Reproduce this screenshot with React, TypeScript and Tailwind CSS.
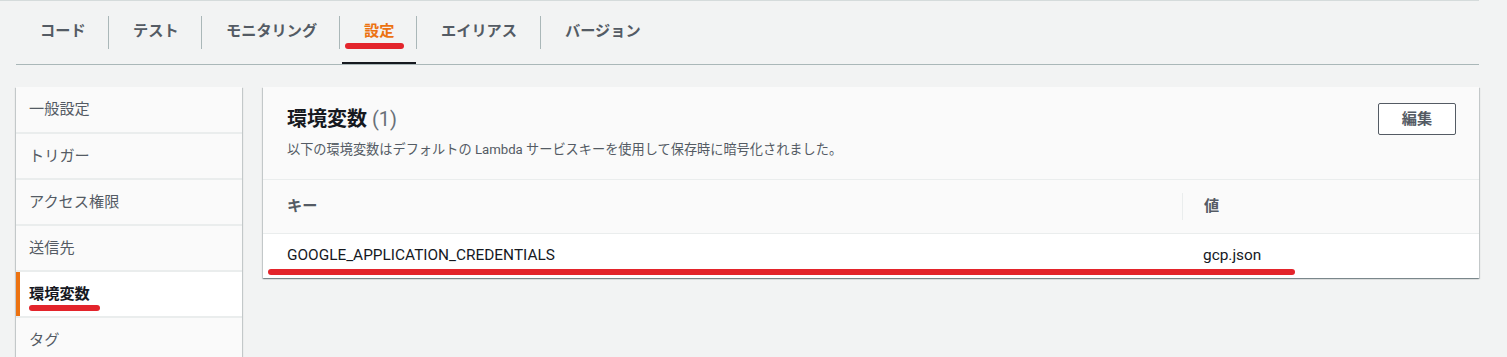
const tabs: [string, string][] = [
  ["コード", "w-[92px]"],
  ["テスト", "w-[92px]"],
  ["モニタリング", "w-[137px]"],
  ["設定", "w-[76px]"],
  ["エイリアス", "w-[123px]"],
  ["バージョン", "w-[123px]"],
];
const side = ["一般設定", "トリガー", "アクセス権限", "送信先", "環境変数", "タグ"];

const shadow =
  "shadow-[0_1px_1px_0_rgba(0,28,36,0.3),1px_1px_1px_0_rgba(0,28,36,0.15),-1px_1px_1px_0_rgba(0,28,36,0.15)]";

export default function App() {
  return (
    <div className="w-[1507px] h-[357px] overflow-hidden bg-[#f2f3f3] font-[Roboto,'Noto_Sans_CJK_JP',sans-serif]">
      <div className="h-px w-[1479px] bg-[#d5dbdb]" />
      {/* Tabs */}
      <div className="ml-4 w-[1463px] h-[64px] border-b border-[#aab7b8] flex">
        {tabs.map(([t, w], i) => {
          const active = t === "設定";
          return (
            <div key={t} className="flex h-full">
              {i > 0 && <div className="w-px h-[33px] mt-[15px] bg-[#aab7b8]" />}
              <div
                className={`relative h-full ${w} pl-6 flex items-center pb-[2px] text-[15.2px] font-bold leading-none whitespace-nowrap ${
                  active ? "text-[#ec7211]" : "text-[#545b64]"
                }`}
              >
                {t}
                {active && (
                  <>
                    <div className="absolute left-[2px] right-0 bottom-0 h-[2px] bg-[#16191f]" />
                    <div className="absolute left-[5px] top-[42px] w-[59px] h-[6px] rounded-full bg-[#e3242b]" />
                  </>
                )}
              </div>
            </div>
          );
        })}
      </div>

      <div className="mt-[22px] ml-4 flex gap-[21px] items-start">
        {/* Sidebar */}
        <div className={`w-[226px] bg-[#eaeded] flex flex-col gap-[2px] ${shadow}`}>
          {side.map((s, i) => {
            const active = s === "環境変数";
            return (
              <div
                key={s}
                className={`relative flex items-center pl-[13px] text-[15.2px] ${i === 0 ? "h-[45px]" : "h-[44px]"} ${
                  active ? "bg-white font-bold text-[#16191f]" : "bg-[#fafafa] text-[#545b64]"
                }`}
              >
                {active && <div className="absolute left-0 top-0 bottom-0 w-1 bg-[#ec7211]" />}
                {s}
                {active && (
                  <div className="absolute left-[13px] top-[33px] w-[71px] h-[6px] rounded-full bg-[#e3242b]" />
                )}
              </div>
            );
          })}
        </div>

        {/* Panel */}
        <div className={`w-[1216px] bg-[#fafafa] ${shadow}`}>
          <div className="h-[93px] border-b border-[#eaeded] flex justify-between items-start pl-6 pr-[23px] pt-4">
            <div className="pt-1">
              <div className="text-[20px] leading-[24px] font-bold text-[#16191f]">
                環境変数 <span className="font-normal text-[#687078]">(1)</span>
              </div>
              <div className="mt-[10px] text-[13.2px] leading-[18px] text-[#545b64]">
                以下の環境変数はデフォルトの Lambda サービスキーを使用して保存時に暗号化されました。
              </div>
            </div>
            <button className="w-[78px] h-[32px] border border-[#545b64] rounded-[2px] bg-white text-[15.2px] font-bold text-[#545b64]">
              編集
            </button>
          </div>
          <div className="grid grid-cols-[919px_1fr] h-[53px] items-center text-[15.2px] font-bold text-[#545b64]">
            <div className="pl-6">キー</div>
            <div className="flex items-center">
              <div className="w-px h-[27px] bg-[#eaeded]" />
              <div className="ml-[21px]">値</div>
            </div>
          </div>
          <div className="relative grid grid-cols-[919px_1fr] h-[45px] items-center border-t border-[#eaeded] bg-white text-[15.4px] text-[#16191f]">
            <div className="pl-6">GOOGLE_APPLICATION_CREDENTIALS</div>
            <div className="pl-[21px]">gcp.json</div>
            <div className="absolute left-[5px] top-[35px] w-[1027px] h-[6px] rounded-full bg-[#e3242b]" />
          </div>
        </div>
      </div>
    </div>
  );
}
